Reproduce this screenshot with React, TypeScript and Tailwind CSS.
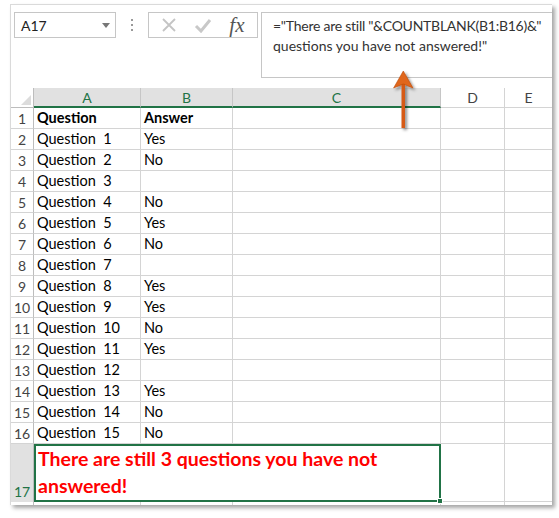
import React from 'react';

const rows: [string, string][] = [
  ['Question 1', 'Yes'],
  ['Question 2', 'No'],
  ['Question 3', ''],
  ['Question 4', 'No'],
  ['Question 5', 'Yes'],
  ['Question 6', 'No'],
  ['Question 7', ''],
  ['Question 8', 'Yes'],
  ['Question 9', 'Yes'],
  ['Question 10', 'No'],
  ['Question 11', 'Yes'],
  ['Question 12', ''],
  ['Question 13', 'Yes'],
  ['Question 14', 'No'],
  ['Question 15', 'No'],
];

const cell = 'border-r border-b border-[#d4d4d4] flex items-end px-[3px] pb-[1px] leading-[18px]';
const rowHead = 'h-[21px] border-r border-b border-[#bdbdbd] border-b-[#d4d4d4] flex items-end justify-center text-[14px] text-[#444] leading-[18px]';

const Arrow = () => (
  <svg className="absolute left-[380px] top-[60px]" width="32" height="70" viewBox="0 0 32 70">
    <defs>
      <filter id="sh" x="-50%" y="-50%" width="200%" height="200%">
        <feDropShadow dx="2" dy="2" stdDeviation="1.5" floodColor="#000" floodOpacity="0.45" />
      </filter>
    </defs>
    <g filter="url(#sh)">
      <rect x="10.5" y="18" width="3.5" height="45" fill="#d65a12" />
      <path d="M12.3 6 L22 23 L12.3 19 L2.6 23 Z" fill="#e0661a" stroke="#b84a0c" strokeWidth="0.6" />
    </g>
  </svg>
);

export default function App() {
  return (
    <div className="w-[559px] h-[518px] bg-white pl-[10px] pt-[4px]" style={{ fontFamily: 'Lato, "Open Sans", sans-serif' }}>
      <div className="relative w-[542px] h-[501px] bg-white border-t border-l border-[#dadada] shadow-[3px_3px_4px_rgba(0,0,0,0.35)] overflow-hidden">
        {/* formula bar */}
        <div className="flex items-start pt-[7px] pl-[3px] h-[83px]">
          <div className="w-[102px] h-[26px] border border-[#c6c6c6] flex items-center justify-between pl-[6px] pr-[5px] text-[14px] text-[#222]">
            <span>A17</span>
            <span className="w-0 h-0 border-l-[4px] border-r-[4px] border-t-[5px] border-l-transparent border-r-transparent border-t-[#777]" />
          </div>
          <div className="w-[32px] h-[26px] flex flex-col items-center justify-center gap-[3px]">
            <span className="w-[2px] h-[2px] bg-[#999]" />
            <span className="w-[2px] h-[2px] bg-[#999]" />
            <span className="w-[2px] h-[2px] bg-[#999]" />
          </div>
          <div className="w-[110px] h-[26px] border border-[#c6c6c6] flex items-center justify-around px-[4px]">
            <svg width="16" height="16" viewBox="0 0 16 16">
              <path d="M2 2 L14 14 M14 2 L2 14" stroke="#c4c4c4" strokeWidth="1.8" />
            </svg>
            <svg width="18" height="16" viewBox="0 0 18 16">
              <path d="M2 9 L7 14 L16 3" stroke="#c8c8c8" strokeWidth="3" fill="none" />
            </svg>
            <span className="text-[21px] italic text-[#555] leading-none" style={{ fontFamily: '"Liberation Serif", serif' }}>fx</span>
          </div>
          <div className="ml-[3px] flex-1 h-[66px] border border-r-0 border-[#c6c6c6] pl-[11px] pt-[3px] text-[14px] leading-[20px] text-[#333] whitespace-nowrap">
            <span className="tracking-[-0.25px]">="There are still "&amp;COUNTBLANK(B1:B16)&amp;"</span>
            <br />
            questions you have not answered!"
          </div>
        </div>

        {/* grid */}
        <div className="grid grid-cols-[23px_107px_92px_208px_64px_48px] text-[14.5px] text-black">
          {/* header */}
          <div className="h-[20px] border-r border-b border-[#bdbdbd] relative">
            <span className="absolute right-[2px] bottom-[2px] w-0 h-0" style={{ borderBottom: '10px solid #dcdcdc', borderLeft: '10px solid transparent' }} />
          </div>
          {['A', 'B', 'C'].map((c) => (
            <div key={c} className="h-[20px] bg-[#e1e1e1] border-r border-[#c6c6c6] border-b-2 border-b-[#217346] flex items-center justify-center text-[14px] text-[#217346]">
              {c}
            </div>
          ))}
          {['D', 'E'].map((c) => (
            <div key={c} className="h-[20px] border-r border-b border-[#d4d4d4] flex items-center justify-center text-[14px] text-[#444]">
              {c}
            </div>
          ))}

          {/* row 1 */}
          <div className={rowHead}>1</div>
          <div className={`${cell} font-bold`}>Question</div>
          <div className={`${cell} font-bold`}>Answer</div>
          <div className={cell} />
          <div className={cell} />
          <div className={cell} />

          {rows.map(([q, a], i) => (
            <React.Fragment key={q}>
              <div className={rowHead}>{i + 2}</div>
              <div className={`${cell} whitespace-pre`}>{q.replace(' ', '  ')}</div>
              <div className={cell}>{a}</div>
              <div className={cell} />
              <div className={cell} />
              <div className={cell} />
            </React.Fragment>
          ))}

          {/* row 17 */}
          <div className="h-[58px] bg-[#e1e1e1] border-r border-[#bdbdbd] flex items-end justify-center text-[14px] text-[#217346] leading-[20px]">17</div>
          <div className="col-span-3 h-[58px] border-2 border-[#217346] relative px-[2px] text-[19.5px] font-bold text-[#ff0000] leading-[27px] flex items-end pb-[1px]">
            <div>There are still 3 questions you have not<br />answered!</div>
            <span className="absolute -right-[4px] -bottom-[4px] w-[6px] h-[6px] bg-[#217346] border border-white" />
          </div>
          <div className="h-[58px] border-r border-b border-[#d4d4d4]" />
          <div className="h-[58px] border-r border-b border-[#d4d4d4]" />
          <div className="h-[8px] border-r border-[#bdbdbd]" />
          <div className="h-[8px] border-r border-[#d4d4d4]" />
          <div className="h-[8px] border-r border-[#d4d4d4]" />
          <div className="h-[8px] border-r border-[#d4d4d4]" />
          <div className="h-[8px] border-r border-[#d4d4d4]" />
          <div className="h-[8px] border-r border-[#d4d4d4]" />
        </div>

        <Arrow />
      </div>
    </div>
  );
}
